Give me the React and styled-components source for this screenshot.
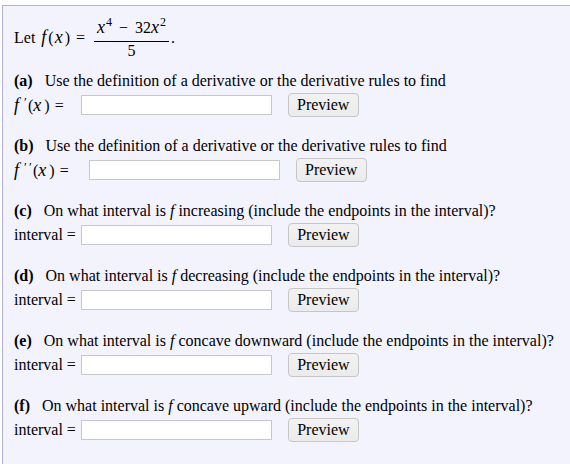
import React from "react";
import styled, { createGlobalStyle } from "styled-components";

const Global = createGlobalStyle`
  html, body { margin: 0; padding: 0; background: #ffffff; overflow: hidden; }
  body { font-family: "Liberation Serif", "Times New Roman", serif; font-size: 16px; color: #000; }
`;

const Problem = styled.div`
  margin: 5px 0 0 2px;
  width: 620px;
  min-height: 520px;
  box-sizing: border-box;
  background: #f3f3fe;
  border-top: 1px solid #b3b3d6;
  border-left: 1px solid #b3b3d6;
  padding: 12px 0 0 11px;
`;

const Title = styled.div`
  line-height: 20px;
  white-space: nowrap;
`;

const V = styled.span`
  font-family: "Liberation Serif", "Times New Roman", serif;
  font-style: italic;
  font-size: 18px;
  margin: 0 ${(p) => p.$r ?? 1}px 0 ${(p) => p.$l ?? 0}px;
`;

const P = styled.span`
  font-size: 16px;
  margin: 0 ${(p) => p.$r ?? 0}px 0 ${(p) => p.$l ?? 0}px;
`;

const Rel = styled.span`
  margin: 0 ${(p) => p.$gap ?? 4}px;
`;

const Frac = styled.span`
  display: inline-flex;
  flex-direction: column;
  align-items: center;
  vertical-align: middle;
  margin: 0 2px 0 ${(p) => p.$left ?? 0}px;
`;

const Num = styled.span`
  line-height: 18px;
  padding: 0 3px 3px;
  white-space: nowrap;
`;

const Bar = styled.span`
  align-self: stretch;
  height: 1px;
  background: #000;
`;

const Den = styled.span`
  line-height: 18px;
  padding-top: 0;
`;

const Sup = styled.sup`
  font-size: 12px;
  font-style: normal;
  vertical-align: 0;
  position: relative;
  top: -7px;
  margin-left: 1px;
`;

const Section = styled.div`
  margin-top: ${(p) => p.$mt}px;
`;

const Prompt = styled.div`
  line-height: 22px;
  height: 22px;
  white-space: nowrap;
`;

const Tag = styled.b`
  font-weight: bold;
  margin-right: 12px;
`;

const Fi = styled.i`
  font-style: italic;
`;

const Row = styled.div`
  display: flex;
  align-items: center;
  height: 24px;
  margin-top: 1px;
  white-space: nowrap;
`;

const Label = styled.span`
  line-height: 20px;
  margin-right: ${(p) => p.$mr}px;
`;

const Field = styled.input`
  box-sizing: border-box;
  width: 191px;
  height: 20px;
  margin: 0;
  padding: 1px 3px;
  border: 1px solid #c8c8c8;
  background: #ffffff;
  font: 16px "Liberation Serif", serif;
  outline: none;
`;

const Preview = styled.button`
  box-sizing: border-box;
  margin: 0 0 0 16px;
  width: 71px;
  height: 24px;
  padding: 0;
  border: 1px solid #c6c6c6;
  border-radius: 4px;
  background: linear-gradient(#f2f2f2, #ebebeb);
  font: 16px "Liberation Serif", "Times New Roman", serif;
  color: #000;
  line-height: 22px;
`;

const Prime = styled.span`
  display: inline-block;
  width: 5px;
  font-style: normal;
  font-size: 13px;
  line-height: 10px;
  vertical-align: 5px;
  text-align: center;
`;

function MathLabel({ primes, mr }) {
  return (
    <Label $mr={mr}>
      <V $r={4}>f</V>
      <Prime>′</Prime>
      {primes === 2 && <Prime>′</Prime>}
      <P $l={0}>(</P>
      <V $l={0} $r={3}>x</V>
      <P>)</P>
      <Rel $gap={5}>=</Rel>
    </Label>
  );
}

const sections = [
  {
    tag: "(a)",
    text: <>Use the definition of a derivative or the derivative rules to find</>,
    label: <MathLabel primes={1} mr={12} />,
  },
  {
    tag: "(b)",
    text: <>Use the definition of a derivative or the derivative rules to find</>,
    label: <MathLabel primes={2} mr={15} />,
  },
  {
    tag: "(c)",
    text: <>On what interval is <Fi>f</Fi> increasing (include the endpoints in the interval)?</>,
  },
  {
    tag: "(d)",
    text: <>On what interval is <Fi>f</Fi> decreasing (include the endpoints in the interval)?</>,
  },
  {
    tag: "(e)",
    text: <>On what interval is <Fi>f</Fi> concave downward (include the endpoints in the interval)?</>,
  },
  {
    tag: "(f)",
    text: <>On what interval is <Fi>f</Fi> concave upward (include the endpoints in the interval)?</>,
  },
];

export default function App() {
  return (
    <>
      <Global />
      <Problem>
        <Title>
          Let <V $l={2} $r={2}>f</V>
          <P>(</P>
          <V $l={1} $r={2}>x</V>
          <P>)</P>
          <Rel $gap={6}>=</Rel>
          <Frac $left={3}>
            <Num>
              <V $r={0}>x</V>
              <Sup>4</Sup>
              <Rel $gap={7}>−</Rel>
              32<V $r={0}>x</V>
              <Sup>2</Sup>
            </Num>
            <Bar />
            <Den>5</Den>
          </Frac>
          .
        </Title>
        {sections.map((s, i) => (
          <Section key={s.tag} $mt={i === 0 ? 10 : 18}>
            <Prompt>
              <Tag>{s.tag}</Tag>
              {s.text}
            </Prompt>
            <Row>
              {s.label ?? <Label $mr={5}>interval =</Label>}
              <Field type="text" />
              <Preview type="button">Preview</Preview>
            </Row>
          </Section>
        ))}
      </Problem>
    </>
  );
}
